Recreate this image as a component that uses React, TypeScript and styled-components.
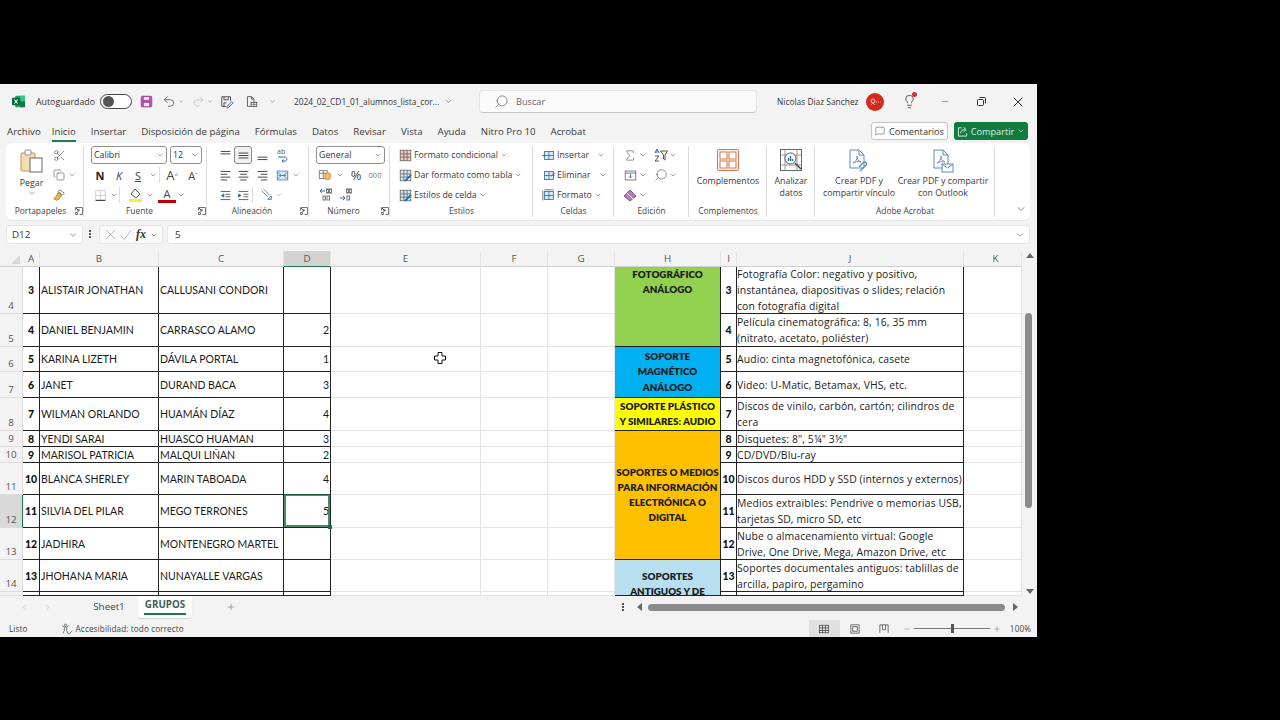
import React from 'react';
import styled, { createGlobalStyle } from 'styled-components';
import {
  ChevronDown, ChevronLeft, ChevronRight, Minus, Plus, Search, Lightbulb,
  Undo2, Redo2, Scissors, MessageSquare, Sigma, Copy,
} from 'lucide-react';

const Global = createGlobalStyle`
  html, body { margin: 0; padding: 0; background: #000; }
  body { width: 1280px; height: 720px; overflow: hidden; font-family: "Open Sans", "Noto Sans", sans-serif; }
`;

const Page = styled.div`
  padding-top: 84px;
  height: 720px;
  box-sizing: border-box;
`;

const Window = styled.div`
  width: 1037px;
  height: 553px;
  background: #f3f3f3;
  display: flex;
  flex-direction: column;
  color: #333;
`;

const TitleBar = styled.div`
  height: 34px;
  box-sizing: border-box;
  padding: 1px 0 0 12px;
  display: flex;
  align-items: center;
  font-size: 8.8px;
`;

const Slot = styled.div<{ $ml?: number; $w?: number; $size?: number }>`
  margin-left: ${p => p.$ml ?? 0}px;
  ${p => (p.$w ? `width: ${p.$w}px;` : '')}
  ${p => (p.$size ? `font-size: ${p.$size}px;` : '')}
  flex: none;
  display: flex;
  align-items: center;
  white-space: nowrap;
`;

const Toggle = styled.div`
  width: 32px;
  height: 15px;
  box-sizing: border-box;
  border: 1px solid #444;
  border-radius: 8px;
  background: #fff;
  padding: 1px 2px;
  &::before {
    content: '';
    display: block;
    width: 11px;
    height: 11px;
    border-radius: 50%;
    background: #555;
  }
`;

const SearchBox = styled.div`
  width: 278px;
  height: 23px;
  margin-left: 26px;
  flex: none;
  box-sizing: border-box;
  background: #fafafa;
  border: 1px solid #e4e4e4;
  border-bottom-color: #c8c8c8;
  border-radius: 4px;
  display: flex;
  align-items: center;
  gap: 7px;
  padding-left: 14px;
  color: #666;
  font-size: 9.2px;
`;

const MirrorSearch = styled(Search)`
  transform: scaleX(-1);
  flex: none;
`;

const Avatar = styled.div`
  width: 18px;
  height: 18px;
  border-radius: 50%;
  background: #d5281f;
  display: flex;
  align-items: center;
  justify-content: center;
  margin-left: 7px;
  flex: none;
`;

const BulbWrap = styled.div`
  position: relative;
  margin-left: 18px;
  width: 14px;
  height: 16px;
  flex: none;
  color: #333;
  &::after {
    content: '';
    position: absolute;
    top: -2px;
    right: -1px;
    width: 5px;
    height: 5px;
    border-radius: 50%;
    background: #d13438;
  }
`;

const TabRow = styled.div`
  height: 25px;
  box-sizing: border-box;
  display: flex;
  align-items: center;
  padding: 1px 9px 0 7px;
  font-size: 9.7px;
  gap: 15px;
`;

const Tab = styled.div<{ $active?: boolean; $mr?: number }>`
  position: relative;
  white-space: nowrap;
  color: #3a3a3a;
  line-height: 18px;
  padding-top: 1px;
  margin-right: ${p => p.$mr ?? 0}px;
  ${p => (p.$active ? `
    &::after {
      content: '';
      position: absolute;
      left: 0;
      right: 0;
      bottom: -1px;
      height: 2px;
      background: #1f7a4d;
    }
  ` : '')}
`;

const TabActions = styled.div`
  margin-left: auto;
  display: flex;
  gap: 6px;
`;

const CommentsButton = styled.div`
  width: 77px;
  height: 18px;
  box-sizing: border-box;
  background: #fdfdfd;
  border: 1px solid #c6c6c6;
  border-radius: 3px;
  display: flex;
  align-items: center;
  justify-content: center;
  gap: 4px;
  font-size: 9.2px;
`;

const ShareButton = styled.div`
  width: 74px;
  height: 18px;
  border-radius: 3px;
  background: #107c41;
  color: #dff0e6;
  display: flex;
  align-items: center;
  justify-content: center;
  gap: 3px;
  font-size: 9.2px;
`;

const Ribbon = styled.div`
  height: 77px;
  margin: 0 7px 0 6px;
  background: #fff;
  border-radius: 6px;
  display: flex;
  position: relative;
  box-shadow: 0 1px 1px rgba(0, 0, 0, .06);
`;

const Group = styled.div<{ $w: number }>`
  width: ${p => p.$w}px;
  flex: none;
  box-sizing: border-box;
  position: relative;
  display: flex;
  flex-direction: column;
  padding-top: 2px;
  &::after {
    content: '';
    position: absolute;
    right: 0;
    top: 3px;
    bottom: 3px;
    width: 1px;
    background: #dcdcdc;
  }
`;

const GroupBody = styled.div<{ $pl?: number; $row?: boolean }>`
  height: 60px;
  padding-left: ${p => p.$pl ?? 0}px;
  display: flex;
  flex-direction: ${p => (p.$row ? 'row' : 'column')};
`;

const GroupLabel = styled.div<{ $pad?: number }>`
  height: 13px;
  line-height: 12px;
  font-size: 8.4px;
  text-align: center;
  color: #444;
  white-space: nowrap;
  padding-right: ${p => p.$pad ?? 0}px;
`;

const LauncherSpot = styled.div`
  position: absolute;
  right: 1px;
  bottom: 5px;
  display: flex;
`;

const ToolRow = styled.div<{ $gap?: number }>`
  height: 20px;
  display: flex;
  align-items: center;
  gap: ${p => p.$gap ?? 0}px;
`;

const Tool = styled.div<{ $w: number; $on?: boolean; $ml?: number }>`
  width: ${p => p.$w}px;
  height: 18px;
  margin-left: ${p => p.$ml ?? 0}px;
  flex: none;
  box-sizing: border-box;
  display: flex;
  align-items: center;
  justify-content: center;
  color: #444;
  font-size: 11px;
  ${p => (p.$on ? 'background: #f0f0f0; border: 1px solid #8a8a8a; border-radius: 3px;' : '')}
`;

const BoldTool = styled(Tool)`
  font-weight: 700;
  color: #222;
`;

const ItalicTool = styled(Tool)`
  font-style: italic;
`;

const UnderTool = styled(Tool)`
  text-decoration: underline;
`;

const GrowTool = styled(Tool)<{ $size: number }>`
  font-size: ${p => p.$size}px;
  sup { font-size: 6px; }
`;

const ColorTool = styled(Tool)`
  height: 15px;
  border-bottom: 3px solid #c00000;
  line-height: 12px;
`;

const PercentTool = styled(Tool)`
  font-size: 13px;
`;

const ThousandTool = styled(Tool)`
  font-size: 7.5px;
  color: #777;
`;

const Select = styled.div<{ $w: number }>`
  width: ${p => p.$w}px;
  height: 18px;
  flex: none;
  box-sizing: border-box;
  border: 1px solid #8f8f8f;
  border-radius: 3px;
  background: #fff;
  display: flex;
  align-items: center;
  justify-content: space-between;
  padding: 0 2px;
  font-size: 8.8px;
`;

const StyleRow = styled.div`
  height: 20px;
  display: flex;
  align-items: center;
  gap: 2px;
  font-size: 8.8px;
  color: #3a3a3a;
  white-space: nowrap;
`;

const BigCol = styled.div<{ $w?: number; $mr?: number }>`
  ${p => (p.$w ? `width: ${p.$w}px; flex: none;` : 'flex: 1;')}
  margin-right: ${p => p.$mr ?? 0}px;
  display: flex;
  flex-direction: column;
  align-items: center;
  padding-top: 4px;
  font-size: 8.8px;
  line-height: 12px;
  text-align: center;
  color: #3a3a3a;
  white-space: nowrap;
`;

const BigLabel = styled.div<{ $mt?: number }>`
  margin-top: ${p => p.$mt ?? 4}px;
`;

const Rule = styled.div`
  width: 1px;
  height: 16px;
  background: #dcdcdc;
  flex: none;
`;

const Collapse = styled.div`
  position: absolute;
  right: 3px;
  bottom: 5px;
  color: #555;
  display: flex;
`;

const FormulaBar = styled.div`
  height: 31px;
  box-sizing: border-box;
  padding: 5px 7px 7px 6px;
  display: flex;
  font-size: 9.8px;
`;

const BarBox = styled.div<{ $w?: number; $ml?: number; $muted?: boolean }>`
  ${p => (p.$w ? `width: ${p.$w}px; flex: none;` : 'flex: 1;')}
  margin-left: ${p => p.$ml ?? 0}px;
  box-sizing: border-box;
  background: ${p => (p.$muted ? '#fafafa' : '#fff')};
  border-radius: 3px;
  border: 1px solid #e6e6e6;
  display: flex;
  align-items: center;
  justify-content: space-between;
  padding: 0 4px 0 5px;
  color: #333;
`;

const FormulaValue = styled.span`
  padding-left: 2px;
`;

const Dots = styled.div<{ $flat?: boolean }>`
  width: 2px;
  height: 8px;
  margin: ${p => (p.$flat ? '0' : '5px 0 0 6px')};
  flex: none;
  background: repeating-linear-gradient(to bottom, #555 0 2px, transparent 2px 3px);
`;

const Fx = styled.span`
  font-family: "Liberation Serif", serif;
  font-style: italic;
  font-weight: 700;
  font-size: 12px;
  color: #333;
`;

const SheetWrap = styled.div`
  height: 345px;
  display: flex;
`;

const Sheet = styled.div`
  width: 1022px;
  height: 345px;
  position: relative;
  overflow: hidden;
  flex: none;
  background: #fff;
  display: grid;
  grid-template-columns: 23px 17px 119px 125px 47px 150px 67px 67px 106px 16px 227px 58px;
  grid-template-rows: 16px 47px 33px 25px 26px 33px 16px 16px 32px 33px 32px 32px 4px;
`;

const ColHead = styled.div<{ $c: number; $on?: boolean; $pl?: number }>`
  grid-column: ${p => p.$c};
  grid-row: 1;
  box-sizing: border-box;
  background: ${p => (p.$on ? '#d2d2d2' : '#f3f3f3')};
  border-right: 1px solid #e4e4e4;
  border-bottom: ${p => (p.$on ? '1px solid #1f7a4d' : '1px solid #d0d0d0')};
  font-size: 9.8px;
  line-height: 15px;
  text-align: center;
  padding-left: ${p => p.$pl ?? 0}px;
  color: #555;
`;

const Corner = styled.div`
  grid-column: 1;
  grid-row: 1;
  background: #f3f3f3;
  border-bottom: 1px solid #d0d0d0;
  box-sizing: border-box;
  display: flex;
  align-items: flex-end;
  justify-content: flex-end;
  padding: 0 3px 2px 0;
  &::after {
    content: '';
    width: 0;
    height: 0;
    border-left: 9px solid transparent;
    border-bottom: 9px solid #d8d8d8;
  }
`;

const RowHead = styled.div<{ $r: number; $on?: boolean }>`
  grid-column: 1;
  grid-row: ${p => p.$r};
  box-sizing: border-box;
  background: ${p => (p.$on ? '#d9d9d9' : '#f3f3f3')};
  border-bottom: 1px solid #dcdcdc;
  border-right: ${p => (p.$on ? '1px solid #1f7a4d' : '1px solid #dcdcdc')};
  display: flex;
  align-items: flex-end;
  justify-content: center;
  font-size: 9.8px;
  line-height: 14px;
  color: #555;
`;

const Cell = styled.div<{ $c: number; $r: number; $grid?: boolean; $right?: boolean }>`
  grid-column: ${p => p.$c};
  grid-row: ${p => p.$r};
  box-sizing: border-box;
  min-width: 0;
  overflow: hidden;
  position: relative;
  display: flex;
  align-items: center;
  justify-content: ${p => (p.$right ? 'flex-end' : 'flex-start')};
  border-right: 1px solid ${p => (p.$grid ? '#e4e4e4' : '#222')};
  border-bottom: 1px solid ${p => (p.$grid ? '#e4e4e4' : '#222')};
  padding: 0 1px;
  color: #1a1a1a;
  font-family: Lato, "Liberation Sans", sans-serif;
  font-size: 10.5px;
  white-space: nowrap;
`;

const NumCell = styled(Cell)`
  justify-content: center;
  padding: 0;
  font-weight: 900;
  color: #111;
`;

const TextCell = styled(Cell)`
  font-family: "Open Sans", sans-serif;
  font-size: 10.4px;
  line-height: 16px;
  white-space: normal;
  color: #222;
  padding: 0;
  letter-spacing: .12px;
`;

const ClipCell = styled(TextCell)`
  align-items: flex-start;
  padding-top: 1px;
  white-space: nowrap;
`;

const Merged = styled.div<{ $r: number; $span: number; $bg: string; $top?: number }>`
  grid-column: 9;
  grid-row: ${p => p.$r} / span ${p => p.$span};
  margin-left: -1px;
  box-sizing: border-box;
  background: ${p => p.$bg};
  border-left: 1px solid #222;
  border-right: 1px solid #222;
  border-bottom: 1px solid #222;
  display: flex;
  align-items: ${p => (p.$top !== undefined ? 'flex-start' : 'center')};
  justify-content: center;
  padding-top: ${p => p.$top ?? 0}px;
  text-align: center;
  font-family: Lato, "Open Sans", sans-serif;
  font-weight: 800;
  font-size: 9.8px;
  line-height: 15.2px;
  color: #1c1c1c;
  overflow: hidden;
  white-space: nowrap;
`;

const Selection = styled.div`
  position: absolute;
  inset: -1px 0 0 0;
  border: 2px solid #1f6b45;
  opacity: .8;
  pointer-events: none;
`;

const SelWrap = styled(Cell)`
  overflow: visible;
  z-index: 2;
  &::after {
    content: '';
    position: absolute;
    right: -2px;
    bottom: -2px;
    width: 4px;
    height: 4px;
    background: #1f6b45;
  }
`;

const CrossCursor = styled.div`
  position: absolute;
  left: 434px;
  top: 101px;
  z-index: 3;
  display: flex;
`;

const VScroll = styled.div`
  width: 15px;
  height: 345px;
  background: #f3f3f3;
  position: relative;
  display: flex;
  flex-direction: column;
  align-items: center;
  justify-content: space-between;
  padding: 2px 0;
  box-sizing: border-box;
`;

const Arrow = styled.div<{ $dir: 'up' | 'down' | 'left' | 'right' }>`
  width: 0;
  height: 0;
  ${p => (p.$dir === 'up' ? 'border-left: 4px solid transparent; border-right: 4px solid transparent; border-bottom: 5px solid #666;' : '')}
  ${p => (p.$dir === 'down' ? 'border-left: 4px solid transparent; border-right: 4px solid transparent; border-top: 5px solid #666;' : '')}
  ${p => (p.$dir === 'left' ? 'border-top: 4px solid transparent; border-bottom: 4px solid transparent; border-right: 5px solid #666;' : '')}
  ${p => (p.$dir === 'right' ? 'border-top: 4px solid transparent; border-bottom: 4px solid transparent; border-left: 5px solid #666;' : '')}
`;

const VThumb = styled.div`
  position: absolute;
  top: 62px;
  left: 3px;
  width: 7px;
  height: 195px;
  border-radius: 4px;
  background: #8a8a8a;
`;

const SheetTabs = styled.div`
  height: 24px;
  display: flex;
  align-items: center;
  font-size: 9.8px;
  color: #444;
  box-sizing: border-box;
  padding-bottom: 2px;
`;

const SheetTab = styled.div<{ $active?: boolean; $w: number; $ml: number }>`
  width: ${p => p.$w}px;
  margin-left: ${p => p.$ml}px;
  flex: none;
  height: 22px;
  display: flex;
  justify-content: center;
  position: relative;
  line-height: ${p => (p.$active ? '18px' : '22px')};
  ${p => (p.$active ? `
    background: #fff;
    font-weight: 700;
    color: #3d5f50;
    border-radius: 0 0 3px 3px;
    box-shadow: 0 1px 1px rgba(0,0,0,.12);
    &::after {
      content: '';
      position: absolute;
      left: 6px;
      right: 6px;
      bottom: 3px;
      height: 2px;
      background: #1f7a4d;
    }
  ` : '')}
`;

const HThumb = styled.div`
  width: 357px;
  height: 7px;
  margin-left: 6px;
  border-radius: 4px;
  background: #8a8a8a;
  flex: none;
`;

const StatusBar = styled.div`
  height: 17px;
  display: flex;
  align-items: center;
  padding-left: 9px;
  font-size: 8.2px;
  color: #444;
  letter-spacing: .1px;
`;

const ViewBtn = styled.div<{ $on?: boolean; $w: number; $ml?: number }>`
  width: ${p => p.$w}px;
  height: 17px;
  margin-left: ${p => p.$ml ?? 0}px;
  flex: none;
  display: flex;
  align-items: center;
  justify-content: center;
  background: ${p => (p.$on ? '#e0e0e0' : 'transparent')};
  color: #444;
`;

const ZoomTrack = styled.div`
  width: 76px;
  height: 1px;
  background: #777;
  margin-left: 3px;
  position: relative;
  flex: none;
  &::after {
    content: '';
    position: absolute;
    left: 37px;
    top: -4px;
    width: 3px;
    height: 9px;
    background: #555;
  }
`;

const Glyph = styled.svg`
  display: block;
  flex: none;
`;

const Ico: React.FC<{ w?: number; h?: number; vb?: string; children: React.ReactNode; color?: string }> = ({ w = 14, h, vb = '0 0 16 16', children, color = '#444' }) => (
  <Glyph width={w} height={h ?? w} viewBox={vb} fill="none" stroke={color} strokeWidth={1}>
    {children}
  </Glyph>
);

const Chev: React.FC<{ s?: number }> = ({ s = 8 }) => <ChevronDown size={s} strokeWidth={1.6} color="#555" />;

const Lines: React.FC<{ ys: number[]; xs: [number, number][] }> = ({ ys, xs }) => (
  <Ico w={13}>
    {ys.map((y, i) => <path key={i} d={`M${xs[i][0]} ${y}H${xs[i][1]}`} strokeWidth={1.2} />)}
  </Ico>
);

const Launcher = () => (
  <LauncherSpot>
    <Ico w={8} vb="0 0 8 8" color="#777">
      <path d="M.5 3.500v-3h7v7h-3" />
      <path d="M1 1l3 3M4 2v2H2" stroke="#555" />
      <path d="M.5 5.500h2v2h-2z" />
    </Ico>
  </LauncherSpot>
);

const ExcelLogo = () => (
  <Ico w={13} color="none">
    <rect x="4" y="1" width="12" height="14" rx="1" fill="#21a366" />
    <rect x="10" y="1" width="6" height="7" fill="#33c481" />
    <rect x="10" y="8" width="6" height="7" fill="#107c41" />
    <rect x="0" y="3.5" width="10" height="9" rx="1" fill="#0b6a37" />
    <path d="M3 5.5l4 5M7 5.5l-4 5" stroke="#fff" strokeWidth={1.3} />
  </Ico>
);

const SaveIcon = () => (
  <Ico w={13} color="#9c3d97">
    <rect x="1.5" y="1.5" width="13" height="13" rx="1" fill="#b65cb0" />
    <rect x="4" y="2" width="8" height="4.5" fill="#f3e3f2" />
    <rect x="4" y="9" width="8" height="5.5" fill="#f3e3f2" />
  </Ico>
);

const FormIcon = () => (
  <Ico w={14}>
    <path d="M2 2h10v5M2 2v11h5M4.5 2v3.5h5V2M4.5 13V9h3" />
    <path d="M8 13l5.5-5.5 1.5 1.500L9.500 14.500 8 15z" stroke="#2b6cb0" />
  </Ico>
);

const PreviewIcon = () => (
  <Ico w={13}>
    <path d="M3 2h5l3 3v4M3 2v12h4M8 2v3h3" />
    <rect x="7.500" y="9" width="7" height="5" fill="#fff" />
    <path d="M7.500 11.500h7M11 9v5" stroke="#666" />
  </Ico>
);

const AvatarMark = () => (
  <Ico w={12} vb="0 0 12 12" color="#f6c9c5">
    <circle cx="4" cy="5" r="2" />
    <path d="M2 9c1-2 3-2 4 0M7 6h1M9 6h1M11 6h.5" />
  </Ico>
);

const WinClose = () => (
  <Ico w={10} vb="0 0 10 10" color="#333"><path d="M.5.500l9 9M9.500.500l-9 9" /></Ico>
);

const WinRestore = () => (
  <Ico w={9} vb="0 0 9 9" color="#333">
    <rect x=".5" y="2.500" width="6" height="6" rx="1" />
    <path d="M2.500.5h5a1 1 0 0 1 1 1v5" />
  </Ico>
);

const ShareIcon = () => (
  <Ico w={11} vb="0 0 12 12" color="#dff0e6">
    <path d="M5 2H1.500v9h9V8" />
    <path d="M4 8c0-3 2-4 4.500-4M7 1.500L10 4 7 6.500" />
  </Ico>
);

const PasteIcon = () => (
  <Glyph width="23" height="24" viewBox="0 0 23 24" fill="none">
    <rect x="1" y="4" width="14" height="18" rx="1" fill="#f2dcb3" stroke="#c9964a" />
    <rect x="5" y="1" width="6" height="5" rx="1" fill="#fff" stroke="#8a8a8a" />
    <rect x="10" y="9" width="12" height="14" fill="#fff" stroke="#666" />
  </Glyph>
);

const BrushIcon = () => (
  <Ico w={14}>
    <path d="M9 2l5 4-2 2-5-4z" stroke="#666" fill="#fff" />
    <path d="M7 5l4 3c-1 3-3 5-6 6-1-1-2-1-3-2 2-1 4-4 5-7z" fill="#e9b44c" stroke="#a87a20" />
  </Ico>
);

const BordersIcon = () => (
  <Ico w={13}>
    <rect x="2" y="2" width="12" height="12" stroke="#999" strokeDasharray="1 1" />
    <path d="M8 2v12M2 8h12" stroke="#999" strokeDasharray="1 1" />
    <path d="M2 14h12" stroke="#333" strokeWidth={1.3} />
  </Ico>
);

const FillIcon = () => (
  <Glyph width="13" height="15" viewBox="0 0 13 15" fill="none">
    <path d="M6 1l5 5-4 4-5-4z" stroke="#555" fill="#fff" />
    <rect x="0" y="11" width="13" height="3" fill="#ffeb3b" />
  </Glyph>
);

const MergeIcon = () => (
  <Ico w={13} color="#4a7fb5">
    <rect x="1.500" y="2.500" width="13" height="11" fill="#dbe9f6" />
    <path d="M4 8h8M4 8l2-2M4 8l2 2M12 8l-2-2M12 8l-2 2" stroke="#2b6cb0" />
    <path d="M1.500 5h3M11.500 5h3M1.500 11h3M11.500 11h3" />
  </Ico>
);

const WrapIcon = () => (
  <Glyph width="13" height="15" viewBox="0 0 13 15" fill="none" stroke="#2b6cb0">
    <text x="1" y="6" fontSize="7" fontFamily="Open Sans" fill="#555" stroke="none">ab</text>
    <path d="M2 9h7c2.500 0 2.500 4 0 4H6M7.500 11.500L6 13l1.500 1.500" />
  </Glyph>
);

const IndentIcon: React.FC<{ flip?: boolean }> = ({ flip }) => (
  <Ico w={13}>
    <path d="M2 3h12M8 6.500h6M8 9.500h6M2 13h12" />
    <path d={flip ? 'M2 6l3 2-3 2z' : 'M6 6L3 8l3 2z'} fill="#2b6cb0" stroke="#2b6cb0" />
  </Ico>
);

const OrientIcon = () => (
  <Ico w={14}>
    <path d="M3 3l7 7M5 1l7 7" stroke="#777" />
    <path d="M10 13l4-4M14 9v4h-4" stroke="#2b6cb0" />
  </Ico>
);

const AccountingIcon = () => (
  <Ico w={14}>
    <rect x="1.500" y="3" width="9" height="9" stroke="#777" />
    <path d="M1.500 6h9M6 3v9" stroke="#777" />
    <ellipse cx="11" cy="7" rx="3" ry="1.500" fill="#f4c16a" stroke="#c18a2a" />
    <path d="M8 7v5c0 1.500 6 1.500 6 0V7" fill="#f4c16a" stroke="#c18a2a" />
  </Ico>
);

const DecimalIcon: React.FC<{ more?: boolean }> = ({ more }) => (
  <Glyph width="13" height="14" viewBox="0 0 13 14" fill="none" stroke="#777">
    <path d={more ? 'M1 3h5M1 3l2-2M1 3l2 2' : 'M1 10h5M6 10L4 8M6 10l-2 2'} stroke="#2b6cb0" />
    <rect x="7.500" y="1" width="2" height="4" />
    <rect x="10.500" y="1" width="2" height="4" />
    <rect x="4" y="8" width="2.500" height="4" stroke={more ? '#777' : 'none'} />
    <rect x="8" y="8" width="2.500" height="4" />
  </Glyph>
);

const TableIcon: React.FC<{ tone: string; pen?: boolean }> = ({ tone, pen }) => (
  <Ico w={13} color="#666">
    <rect x="1.500" y="1.500" width="13" height="13" fill={tone} />
    <path d="M1.500 6h13M1.500 10h13M6 1.500v13M10 1.500v13" stroke="#666" />
    {pen && <path d="M7 14l7-7 1 1-7 7z" fill="#2b6cb0" stroke="#2b6cb0" />}
  </Ico>
);

const CellsIcon: React.FC<{ kind: 'ins' | 'del' | 'fmt' }> = ({ kind }) => (
  <Ico w={13} color="#2b6cb0">
    <rect x="3" y="3" width="11" height="10" fill="#dbe9f6" />
    <path d="M3 8h11M8.500 3v10" />
    {kind === 'ins' && <path d="M0 8h4M2 6l2 2-2 2" stroke="#2a8a4a" />}
    {kind === 'del' && <path d="M12 5l4 4M16 5l-4 4" stroke="#c33" />}
    {kind === 'fmt' && <path d="M1 2v12M3 1h11" stroke="#555" />}
  </Ico>
);

const SortIcon = () => (
  <Glyph width="14" height="14" viewBox="0 0 14 14" fill="none" stroke="#555">
    <path d="M1 5l2-4 2 4M1.500 4h3" stroke="#2b6cb0" />
    <path d="M1 8h4l-4 5h4" />
    <path d="M6.500 3h7L11 7v5l-1.500-1V7z" />
  </Glyph>
);

const FillDownIcon = () => (
  <Ico w={13} color="#666">
    <rect x="1.500" y="2.500" width="13" height="11" />
    <path d="M1.500 5h13" />
    <path d="M8 6v5M6 9l2 2 2-2" stroke="#2b6cb0" />
  </Ico>
);

const EraserIcon = () => (
  <Glyph width="14" height="13" viewBox="0 0 14 13" fill="none">
    <path d="M1 7l6-6 6 6-6 5z" fill="#b57ac0" stroke="#8d4a9c" />
    <path d="M4 4l6 6" stroke="#fff" />
  </Glyph>
);

const AddinsIcon = () => (
  <Glyph width="22" height="22" viewBox="0 0 22 22" fill="none" stroke="#d2764a">
    <rect x="0.500" y="0.500" width="21" height="21" rx="1" fill="#fdf2ea" />
    <rect x="3" y="3" width="7" height="7" fill="#fff" />
    <rect x="12" y="3" width="7" height="7" fill="#fff" />
    <rect x="3" y="12" width="7" height="7" fill="#fff" />
    <rect x="12" y="12" width="7" height="7" fill="#fff" />
  </Glyph>
);

const AnalyzeIcon = () => (
  <Glyph width="22" height="22" viewBox="0 0 22 22" fill="none" stroke="#666">
    <rect x="0.500" y="0.500" width="21" height="21" fill="#fff" />
    <path d="M0.500 6h21M0.500 16h21M5 .5v21M17 .5v21" stroke="#999" />
    <circle cx="10.500" cy="9.500" r="5.500" fill="#fff" stroke="#555" />
    <path d="M15 14l6 6" stroke="#444" strokeWidth={1.5} />
    <path d="M8.500 12V9M10.500 12V7M12.500 12v-2" stroke="#2b6cb0" strokeWidth={1.4} />
  </Glyph>
);

const PdfIcon: React.FC<{ mail?: boolean }> = ({ mail }) => (
  <Glyph width="22" height="24" viewBox="0 0 22 24" fill="none" stroke="#5b8bc0">
    <path d="M2 1h9l5 5v13H2z" fill="#fff" />
    <path d="M11 1v5h5" />
    <path d="M5 14c3-1 4-4 4-7 0 3 1 5 4 6-3-1-6 0-8 1z" stroke="#7a93b5" />
    {mail
      ? <rect x="10" y="15" width="11" height="8" fill="#fff" />
      : <path d="M12 22l6-6c2-2-1-4-3-2l-4 4" stroke="#5b8bc0" strokeWidth={1.4} />}
    {mail && <path d="M10 15l5.500 4 5.500-4" />}
  </Glyph>
);

const CrossPlus = () => (
  <Glyph width="12" height="12" viewBox="0 0 12 12">
    <path d="M4 .5h4V4h3.500v4H8v3.500H4V8H.5V4H4z" fill="#fff" stroke="#111" strokeWidth={1} />
  </Glyph>
);

const AccessIcon = () => (
  <Ico w={12} color="#555">
    <circle cx="6" cy="3" r="1.500" />
    <path d="M1.500 3.500l3 2 3 0 3-2M4.500 6v4l-2 4M7.500 6v4l2 4" />
    <path d="M9 13l2 2 4-5" stroke="#2a8a4a" />
  </Ico>
);

const columns: { label: string; on?: boolean; pl?: number }[] = [
  { label: 'A' }, { label: 'B' }, { label: 'C' }, { label: 'D', on: true }, { label: 'E' }, { label: 'F' },
  { label: 'G' }, { label: 'H' }, { label: 'I' }, { label: 'J' }, { label: 'K', pl: 6 },
];

const students: { row: number; n?: number; first?: string; last?: string; group?: number }[] = [
  { row: 4, n: 3, first: 'ALISTAIR JONATHAN', last: 'CALLUSANI CONDORI' },
  { row: 5, n: 4, first: 'DANIEL BENJAMIN', last: 'CARRASCO ALAMO', group: 2 },
  { row: 6, n: 5, first: 'KARINA LIZETH', last: 'DÁVILA PORTAL', group: 1 },
  { row: 7, n: 6, first: 'JANET', last: 'DURAND BACA', group: 3 },
  { row: 8, n: 7, first: 'WILMAN ORLANDO', last: 'HUAMÁN DÍAZ', group: 4 },
  { row: 9, n: 8, first: 'YENDI SARAI', last: 'HUASCO HUAMAN', group: 3 },
  { row: 10, n: 9, first: 'MARISOL PATRICIA', last: 'MALQUI LIÑAN', group: 2 },
  { row: 11, n: 10, first: 'BLANCA SHERLEY', last: 'MARIN TABOADA', group: 4 },
  { row: 12, n: 11, first: 'SILVIA DEL PILAR', last: 'MEGO TERRONES', group: 5 },
  { row: 13, n: 12, first: 'JADHIRA', last: 'MONTENEGRO MARTEL' },
  { row: 14, n: 13, first: 'JHOHANA MARIA', last: 'NUNAYALLE VARGAS' },
  { row: 15 },
];

const media: { row: number; n: string; text: React.ReactNode }[] = [
  { row: 4, n: '3', text: <>Fotografía Color: negativo y positivo,<br />instantánea, diapositivas o slides; relación<br />con fotografía digital</> },
  { row: 5, n: '4', text: <>Película cinematográfica: 8, 16, 35 mm<br />(nitrato, acetato, poliéster)</> },
  { row: 6, n: '5', text: 'Audio: cinta magnetofónica, casete' },
  { row: 7, n: '6', text: 'Video: U-Matic, Betamax, VHS, etc.' },
  { row: 8, n: '7', text: <>Discos de vinilo, carbón, cartón; cilindros de<br />cera</> },
  { row: 9, n: '8', text: 'Disquetes: 8", 5¼" 3½"' },
  { row: 10, n: '9', text: 'CD/DVD/Blu-ray' },
  { row: 11, n: '10', text: 'Discos duros HDD y SSD (internos y externos)' },
  { row: 12, n: '11', text: <>Medios extraibles: Pendrive o memorias USB,<br />tarjetas SD, micro SD, etc</> },
  { row: 13, n: '12', text: <>Nube o almacenamiento virtual: Google<br />Drive, One Drive, Mega, Amazon Drive, etc</> },
  { row: 14, n: '13', text: <>Soportes documentales antiguos: tablillas de<br />arcilla, papiro, pergamino</> },
];

const Spreadsheet = () => (
  <Sheet>
    <Corner />
    {columns.map((c, i) => <ColHead key={c.label} $c={i + 2} $on={c.on} $pl={c.pl}>{c.label}</ColHead>)}
    {students.map(s => {
      const r = s.row - 2;
      const selected = s.row === 12;
      return (
        <React.Fragment key={s.row}>
          <RowHead $r={r} $on={selected}>{s.row < 15 ? s.row : ''}</RowHead>
          <NumCell $c={2} $r={r}>{s.n}</NumCell>
          <Cell $c={3} $r={r}>{s.first}</Cell>
          <Cell $c={4} $r={r}>{s.last}</Cell>
          {selected
            ? <SelWrap $c={5} $r={r} $right>{s.group}<Selection /></SelWrap>
            : <Cell $c={5} $r={r} $right>{s.group}</Cell>}
          <Cell $c={6} $r={r} $grid />
          <Cell $c={7} $r={r} $grid />
          <Cell $c={8} $r={r} $grid />
          <Cell $c={12} $r={r} $grid />
        </React.Fragment>
      );
    })}
    <Merged $r={2} $span={2} $bg="#92d050" $top={0}>FOTOGRÁFICO<br />ANÁLOGO</Merged>
    <Merged $r={4} $span={2} $bg="#00b0f0">SOPORTE<br />MAGNÉTICO<br />ANÁLOGO</Merged>
    <Merged $r={6} $span={1} $bg="#ffff00">SOPORTE PLÁSTICO<br />Y SIMILARES: AUDIO</Merged>
    <Merged $r={7} $span={5} $bg="#ffc000">SOPORTES O MEDIOS<br />PARA INFORMACIÓN<br />ELECTRÓNICA O<br />DIGITAL</Merged>
    <Merged $r={12} $span={2} $bg="#b7dff0" $top={9}>SOPORTES<br />ANTIGUOS Y DE</Merged>
    {media.map(m => (
      <React.Fragment key={m.row}>
        <NumCell $c={10} $r={m.row - 2}>{m.n}</NumCell>
        <TextCell $c={11} $r={m.row - 2}>{m.text}</TextCell>
      </React.Fragment>
    ))}
    <NumCell $c={10} $r={13} />
    <ClipCell $c={11} $r={13}>Soportes audiovisuales antiguos: daguerrotipos</ClipCell>
    <CrossCursor><CrossPlus /></CrossCursor>
  </Sheet>
);

const RibbonBar = () => (
  <Ribbon>
    <Group $w={78}>
      <GroupBody $row>
        <BigCol $w={51} $mr={-5}>
          <PasteIcon />
          <BigLabel>Pegar</BigLabel>
          <Chev />
        </BigCol>
        <div>
          <ToolRow><Tool $w={14}><Scissors size={13} strokeWidth={1.1} color="#444" /></Tool></ToolRow>
          <ToolRow><Tool $w={14}><Copy size={12} strokeWidth={1.1} color="#444" /></Tool><Tool $w={12}><Chev /></Tool></ToolRow>
          <ToolRow><Tool $w={14}><BrushIcon /></Tool></ToolRow>
        </div>
      </GroupBody>
      <GroupLabel $pad={9}>Portapapeles</GroupLabel>
      <Launcher />
    </Group>
    <Group $w={123}>
      <GroupBody $pl={7}>
        <ToolRow $gap={3}>
          <Select $w={76}>Calibri<Chev /></Select>
          <Select $w={32}>12<Chev /></Select>
        </ToolRow>
        <ToolRow>
          <BoldTool $w={18}>N</BoldTool>
          <ItalicTool $w={20}>K</ItalicTool>
          <UnderTool $w={18}>S</UnderTool>
          <Tool $w={12}><Chev /></Tool>
          <Rule />
          <GrowTool $size={13} $w={18} $ml={3}>A<sup>^</sup></GrowTool>
          <GrowTool $size={11} $w={20} $ml={2}>A<sup>ˇ</sup></GrowTool>
        </ToolRow>
        <ToolRow>
          <Tool $w={18}><BordersIcon /></Tool>
          <Tool $w={10}><Chev /></Tool>
          <Rule />
          <Tool $w={19} $ml={6}><FillIcon /></Tool>
          <Tool $w={10}><Chev /></Tool>
          <ColorTool $w={18} $ml={3}>A</ColorTool>
          <Tool $w={10}><Chev /></Tool>
        </ToolRow>
      </GroupBody>
      <GroupLabel $pad={12}>Fuente</GroupLabel>
      <Launcher />
    </Group>
    <Group $w={102}>
      <GroupBody $pl={9}>
        <ToolRow>
          <Tool $w={18}><Lines ys={[3, 6]} xs={[[2, 14], [2, 14]]} /></Tool>
          <Tool $w={18} $on><Lines ys={[5, 8, 11]} xs={[[2, 14], [2, 14], [2, 14]]} /></Tool>
          <Tool $w={20}><Lines ys={[10, 13]} xs={[[2, 14], [2, 14]]} /></Tool>
          <Tool $w={20}><WrapIcon /></Tool>
        </ToolRow>
        <ToolRow>
          <Tool $w={18}><Lines ys={[3, 6.500, 10, 13.500]} xs={[[2, 14], [2, 10], [2, 14], [2, 10]]} /></Tool>
          <Tool $w={18}><Lines ys={[3, 6.500, 10, 13.500]} xs={[[2, 14], [4, 12], [2, 14], [4, 12]]} /></Tool>
          <Tool $w={20}><Lines ys={[3, 6.500, 10, 13.500]} xs={[[2, 14], [6, 14], [2, 14], [6, 14]]} /></Tool>
          <Tool $w={20}><MergeIcon /></Tool>
          <Tool $w={8}><Chev /></Tool>
        </ToolRow>
        <ToolRow>
          <Tool $w={18}><IndentIcon /></Tool>
          <Tool $w={18}><IndentIcon flip /></Tool>
          <Rule />
          <Tool $w={20} $ml={3}><OrientIcon /></Tool>
          <Tool $w={6}><Chev /></Tool>
        </ToolRow>
      </GroupBody>
      <GroupLabel $pad={12}>Alineación</GroupLabel>
      <Launcher />
    </Group>
    <Group $w={81}>
      <GroupBody $pl={7}>
        <ToolRow><Select $w={69}>General<Chev /></Select></ToolRow>
        <ToolRow>
          <Tool $w={18}><AccountingIcon /></Tool>
          <Tool $w={12}><Chev /></Tool>
          <PercentTool $w={20}>%</PercentTool>
          <ThousandTool $w={18}>000</ThousandTool>
        </ToolRow>
        <ToolRow>
          <Tool $w={18}><DecimalIcon more /></Tool>
          <Tool $w={14} $ml={4}><DecimalIcon /></Tool>
        </ToolRow>
      </GroupBody>
      <GroupLabel $pad={12}>Número</GroupLabel>
      <Launcher />
    </Group>
    <Group $w={143}>
      <GroupBody $pl={9}>
        <StyleRow><TableIcon tone="#f4c7c3" />Formato condicional<Chev /></StyleRow>
        <StyleRow><TableIcon tone="#dbe9f6" pen />Dar formato como tabla<Chev /></StyleRow>
        <StyleRow><TableIcon tone="#cfe2f3" pen />Estilos de celda<Chev /></StyleRow>
      </GroupBody>
      <GroupLabel>Estilos</GroupLabel>
    </Group>
    <Group $w={81}>
      <GroupBody $pl={9}>
        <StyleRow><CellsIcon kind="ins" />Insertar<Tool $w={10} $ml={5}><Chev /></Tool></StyleRow>
        <StyleRow><CellsIcon kind="del" />Eliminar<Tool $w={10} $ml={5}><Chev /></Tool></StyleRow>
        <StyleRow><CellsIcon kind="fmt" />Formato<Chev /></StyleRow>
      </GroupBody>
      <GroupLabel>Celdas</GroupLabel>
    </Group>
    <Group $w={75}>
      <GroupBody $pl={9}>
        <ToolRow>
          <Tool $w={14}><Sigma size={15} strokeWidth={1} color="#444" /></Tool>
          <Tool $w={12}><Chev /></Tool>
          <Tool $w={14} $ml={5}><SortIcon /></Tool>
          <Tool $w={10}><Chev /></Tool>
        </ToolRow>
        <ToolRow>
          <Tool $w={14}><FillDownIcon /></Tool>
          <Tool $w={12}><Chev /></Tool>
          <Tool $w={14} $ml={5}><MirrorSearch size={14} strokeWidth={1} color="#444" /></Tool>
          <Tool $w={10}><Chev /></Tool>
        </ToolRow>
        <ToolRow>
          <Tool $w={14}><EraserIcon /></Tool>
          <Tool $w={12}><Chev /></Tool>
        </ToolRow>
      </GroupBody>
      <GroupLabel>Edición</GroupLabel>
    </Group>
    <Group $w={78}>
      <GroupBody $row>
        <BigCol><AddinsIcon /><BigLabel>Complementos</BigLabel></BigCol>
      </GroupBody>
      <GroupLabel>Complementos</GroupLabel>
    </Group>
    <Group $w={48}>
      <GroupBody $row>
        <BigCol><AnalyzeIcon /><BigLabel>Analizar<br />datos</BigLabel></BigCol>
      </GroupBody>
    </Group>
    <Group $w={180}>
      <GroupBody $row>
        <BigCol $w={88}><PdfIcon /><BigLabel $mt={2}>Crear PDF y<br />compartir vínculo</BigLabel></BigCol>
        <BigCol $w={80}><PdfIcon mail /><BigLabel $mt={2}>Crear PDF y compartir<br />con Outlook</BigLabel></BigCol>
      </GroupBody>
      <GroupLabel>Adobe Acrobat</GroupLabel>
    </Group>
    <Collapse><ChevronDown size={12} strokeWidth={1.4} /></Collapse>
  </Ribbon>
);

const App: React.FC = () => (
  <Page>
    <Global />
    <Window>
      <TitleBar>
        <ExcelLogo />
        <Slot $ml={11} $w={58}>Autoguardado</Slot>
        <Slot $ml={6}><Toggle /></Slot>
        <Slot $ml={8}><SaveIcon /></Slot>
        <Slot $ml={9} $w={14}><Undo2 size={15} strokeWidth={1.2} color="#444" /></Slot>
        <Slot $ml={2} $w={6}><Chev s={7} /></Slot>
        <Slot $ml={8} $w={13}><Redo2 size={15} strokeWidth={1} color="#aaa" /></Slot>
        <Slot $ml={2} $w={6}><Chev s={7} /></Slot>
        <Slot $ml={7}><FormIcon /></Slot>
        <Slot $ml={11}><PreviewIcon /></Slot>
        <Slot $ml={11} $w={7}><Chev s={7} /></Slot>
        <Slot $ml={18} $w={146} $size={8.4}>2024_02_CD1_01_alumnos_lista_cor...</Slot>
        <Slot $ml={4} $w={9}><Chev s={9} /></Slot>
        <SearchBox><MirrorSearch size={15} strokeWidth={1} color="#555" />Buscar</SearchBox>
        <Slot $ml={20} $w={82} $size={8.4}>Nicolas Diaz Sanchez</Slot>
        <Avatar><AvatarMark /></Avatar>
        <BulbWrap><Lightbulb size={15} strokeWidth={1.2} /></BulbWrap>
        <Slot $ml={24} $w={10}><Minus size={13} strokeWidth={1} color="#333" /></Slot>
        <Slot $ml={27} $w={9}><WinRestore /></Slot>
        <Slot $ml={27} $w={9}><WinClose /></Slot>
      </TitleBar>
      <TabRow>
        <Tab $mr={-4}>Archivo</Tab>
        <Tab $active>Inicio</Tab>
        <Tab>Insertar</Tab>
        <Tab>Disposición de página</Tab>
        <Tab>Fórmulas</Tab>
        <Tab>Datos</Tab>
        <Tab>Revisar</Tab>
        <Tab>Vista</Tab>
        <Tab>Ayuda</Tab>
        <Tab>Nitro Pro 10</Tab>
        <Tab>Acrobat</Tab>
        <TabActions>
          <CommentsButton><MessageSquare size={10} strokeWidth={1.1} />Comentarios</CommentsButton>
          <ShareButton><ShareIcon />Compartir<ChevronDown size={8} strokeWidth={1.8} /></ShareButton>
        </TabActions>
      </TabRow>
      <RibbonBar />
      <FormulaBar>
        <BarBox $w={77}>D12<Chev s={10} /></BarBox>
        <Dots />
        <BarBox $w={64} $ml={8} $muted>
          <Ico w={11} vb="0 0 11 11" color="#bbb"><path d="M1 1l9 9M10 1l-9 9" /></Ico>
          <Ico w={12} vb="0 0 12 11" color="#bbb"><path d="M1 6l3 4 7-9" /></Ico>
          <Fx>fx</Fx>
          <Chev />
        </BarBox>
        <BarBox $ml={4}>
          <FormulaValue>5</FormulaValue>
          <ChevronDown size={10} strokeWidth={1.4} color="#555" />
        </BarBox>
      </FormulaBar>
      <SheetWrap>
        <Spreadsheet />
        <VScroll>
          <Arrow $dir="up" />
          <VThumb />
          <Arrow $dir="down" />
        </VScroll>
      </SheetWrap>
      <SheetTabs>
        <Slot $ml={20} $w={8}><ChevronLeft size={11} strokeWidth={1} color="#999" /></Slot>
        <Slot $ml={16} $w={8}><ChevronRight size={11} strokeWidth={1} color="#999" /></Slot>
        <SheetTab $w={54} $ml={30}>Sheet1</SheetTab>
        <SheetTab $active $w={54} $ml={2}>GRUPOS</SheetTab>
        <Slot $ml={34} $w={10}><Plus size={12} strokeWidth={1.1} color="#555" /></Slot>
        <Slot $ml={386} $w={3}><Dots $flat /></Slot>
        <Slot $ml={12}><Arrow $dir="left" /></Slot>
        <HThumb />
        <Slot $ml={8}><Arrow $dir="right" /></Slot>
      </SheetTabs>
      <StatusBar>
        Listo
        <Slot $ml={33}><AccessIcon /></Slot>
        <Slot $ml={3}>Accesibilidad: todo correcto</Slot>
        <ViewBtn $on $w={31} $ml={625}>
          <Ico w={12}><rect x="2" y="3" width="12" height="10" /><path d="M2 6.500h12M2 10h12M6 3v10M10 3v10" /></Ico>
        </ViewBtn>
        <ViewBtn $w={12} $ml={9}>
          <Ico w={12}><rect x="2.500" y="2.500" width="11" height="11" /><rect x="5" y="5" width="6" height="6" /></Ico>
        </ViewBtn>
        <ViewBtn $w={12} $ml={17}>
          <Ico w={12}><path d="M2.500 13V2.500h11V13M6 2.500V9h4V2.500" /></Ico>
        </ViewBtn>
        <Slot $ml={13}><Minus size={8} strokeWidth={1} color="#444" /></Slot>
        <ZoomTrack />
        <Slot $ml={3}><Plus size={8} strokeWidth={1} color="#444" /></Slot>
        <Slot $ml={9}>100%</Slot>
      </StatusBar>
    </Window>
  </Page>
);

export default App;
